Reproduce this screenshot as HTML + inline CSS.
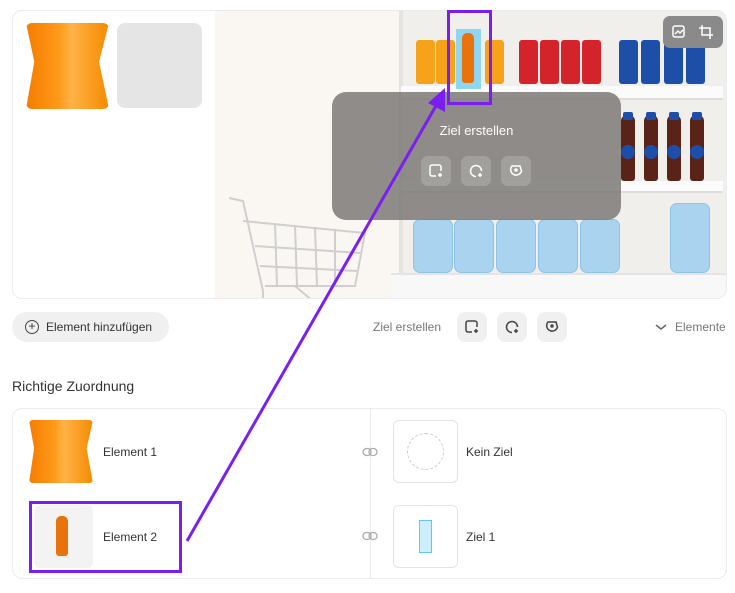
<!DOCTYPE html>
<html><head><meta charset="utf-8"><style>
*{margin:0;padding:0;box-sizing:border-box}
body{width:735px;height:593px;background:#fff;position:relative;overflow:hidden;font-family:"Liberation Sans",sans-serif;color:#333}
.a{position:absolute}
.can{position:absolute;top:29px;width:19px;height:44px;border-radius:3px}
.btn{position:absolute;width:30px;height:30px;background:#f0f0f0;border-radius:8px;display:flex;align-items:center;justify-content:center}
.pbtn{position:absolute;top:145px;width:30px;height:30px;background:rgba(255,255,255,0.18);border-radius:7px;display:flex;align-items:center;justify-content:center}
.wt{position:absolute;top:208px;width:40px;height:54px;background:#a9d3ef;border-radius:7px;border:1px solid #8ec3e6}
.pb{position:absolute;top:104px;width:14px;height:66px;background:#5a2318;border-radius:6px 6px 3px 3px}
.pb:before{content:"";position:absolute;left:2px;top:-3px;width:10px;height:8px;background:#1e4fa8;border-radius:2px}
.pb:after{content:"";position:absolute;left:0;top:30px;width:14px;height:14px;background:#1e4fa8;border-radius:50%}
</style></head><body>
<div class="a" style="left:12px;top:10px;width:715px;height:289px;border:1px solid #ececec;border-radius:10px;overflow:hidden;background:#faf7f3">
  <div class="a" style="left:0;top:0;width:202px;height:289px;background:#fff"></div>
  <div class="a" style="left:13px;top:12px;width:83px;height:86px;background:linear-gradient(90deg,#f57c00,#ff9a1a 40%,#ffb347 55%,#f58a00);border-radius:6px;clip-path:polygon(0 0,100% 0,88% 45%,100% 100%,0 100%,10% 45%)"></div>
  <div class="a" style="left:104px;top:12px;width:85px;height:85px;background:#e5e5e5;border-radius:8px"></div>
  <svg class="a" style="left:202px;top:180px" width="170" height="110"><g fill="none" stroke="#cfcfcf" stroke-width="2"><path d="M14 7 L28 10 L48 100 L48 110"/><path d="M28 30 L150 42 L140 95 L50 95"/><path d="M40 55 L145 62 M45 75 L142 80"/><path d="M60 32 L62 95 M80 34 L82 95 M100 36 L102 95 M120 38 L120 95"/><path d="M80 95 L110 120"/></g></svg>
  <div class="a" style="left:386px;top:0;width:329px;height:289px;background:#f1efec;border-left:4px solid #e6e3df"></div>
  <div class="a" style="left:388px;top:75px;width:322px;height:14px;background:#fbfbfb;border-bottom:2px solid #ddd"></div>
  <div class="a" style="left:388px;top:170px;width:322px;height:12px;background:#fbfbfb;border-bottom:2px solid #ddd"></div>
  <div class="a" style="left:378px;top:262px;width:337px;height:27px;background:#f8f8f8;border-top:2px solid #e4e4e4"></div>
  <div class="can" style="left:403px;background:#f7a21b"></div>
  <div class="can" style="left:423px;background:#f7a21b"></div>
  <div class="can" style="left:472px;background:#f7a21b"></div>
  <div class="a" style="left:443px;top:18px;width:25px;height:60px;background:#8fd6f2"></div>
  <div class="a" style="left:449px;top:22px;width:12px;height:50px;background:#e8720c;border-radius:5px 5px 3px 3px"></div>
  <div class="can" style="left:506px;background:#d4232b"></div>
  <div class="can" style="left:527px;background:#d4232b"></div>
  <div class="can" style="left:548px;background:#d4232b"></div>
  <div class="can" style="left:569px;background:#d4232b"></div>
  <div class="can" style="left:606px;background:#1e4fa8"></div>
  <div class="can" style="left:628px;background:#1e4fa8"></div>
  <div class="can" style="left:651px;background:#1e4fa8"></div>
  <div class="can" style="left:673px;background:#1e4fa8"></div>
  <div class="pb" style="left:608px"></div><div class="pb" style="left:631px"></div><div class="pb" style="left:654px"></div><div class="pb" style="left:677px"></div>
  <div class="wt" style="left:400px"></div><div class="wt" style="left:441px"></div><div class="wt" style="left:483px"></div><div class="wt" style="left:525px"></div><div class="wt" style="left:567px"></div>
  <div class="wt" style="left:657px;top:192px;height:70px"></div>
  <div class="a" style="left:650px;top:5px;width:60px;height:32px;background:#8a8a8a;border-radius:7px"></div>
  <svg class="a" style="left:659px;top:13px" width="45" height="16" fill="none" stroke="#fff" stroke-width="1.5"><rect x="1" y="2" width="11" height="11" rx="2"/><path d="M3 10 l3-3 2 2 3-3"/><path d="M30 1 v10 h11 M27 4 h11 v11"/></svg>
  <div class="a" style="left:319px;top:81px;width:289px;height:128px;background:rgba(128,125,122,0.88);border-radius:14px"></div>
  <div class="a" style="left:319px;top:112px;width:289px;text-align:center;color:#fff;font-size:13px">Ziel erstellen</div>
  <div class="pbtn" style="left:408px"><svg width="14" height="14" fill="none" stroke="#fff" stroke-width="1.5"><path d="M7 12 H3 a2 2 0 0 1-2-2 V3 a2 2 0 0 1 2-2 h7 a2 2 0 0 1 2 2 v4 M11 9 v4 M9 11 h4"/></svg></div>
  <div class="pbtn" style="left:448px"><svg width="14" height="14" fill="none" stroke="#fff" stroke-width="1.5"><path d="M7 12.5 A5.5 5.5 0 1 1 12.5 7 M11 9 v4 M9 11 h4"/></svg></div>
  <div class="pbtn" style="left:488px"><svg width="14" height="14" fill="none" stroke="#fff" stroke-width="1.5"><path d="M3 2 L11 2 L12.5 7 A5.5 5.5 0 1 1 3 2 Z"/><circle cx="7" cy="6" r="1"/></svg></div>
</div>
<div class="a" style="left:12px;top:312px;width:157px;height:30px;background:#f0f0f0;border-radius:15px;font-size:12px;line-height:30px;padding-left:34px;color:#333">Element hinzufügen</div>
<div class="a" style="left:25px;top:320px;width:14px;height:14px;border:1.5px solid #444;border-radius:50%;font-size:12px;line-height:11px;text-align:center">+</div>
<div class="a" style="left:373px;top:320px;font-size:12px;color:#777">Ziel erstellen</div>
<div class="btn" style="left:457px;top:312px"><svg width="14" height="14" fill="none" stroke="#444" stroke-width="1.5"><path d="M7 12 H3 a2 2 0 0 1-2-2 V3 a2 2 0 0 1 2-2 h7 a2 2 0 0 1 2 2 v4 M11 9 v4 M9 11 h4"/></svg></div>
<div class="btn" style="left:497px;top:312px"><svg width="14" height="14" fill="none" stroke="#444" stroke-width="1.5"><path d="M7 12.5 A5.5 5.5 0 1 1 12.5 7 M11 9 v4 M9 11 h4"/></svg></div>
<div class="btn" style="left:537px;top:312px"><svg width="14" height="14" fill="none" stroke="#444" stroke-width="1.5"><path d="M3 2 L11 2 L12.5 7 A5.5 5.5 0 1 1 3 2 Z"/><circle cx="7" cy="6" r="1"/></svg></div>
<svg class="a" style="left:655px;top:323px" width="12" height="8" fill="none" stroke="#666" stroke-width="1.5"><path d="M1 2 L6 6 L11 2"/></svg>
<div class="a" style="left:675px;top:320px;font-size:12px;color:#777">Elemente</div>
<div class="a" style="left:12px;top:378px;font-size:14px;color:#333">Richtige Zuordnung</div>
<div class="a" style="left:12px;top:408px;width:715px;height:171px;border:1px solid #ececec;border-radius:10px"></div>
<div class="a" style="left:370px;top:409px;width:1px;height:169px;background:#ececec"></div>
<div class="a" style="left:29px;top:420px;width:64px;height:63px;background:linear-gradient(90deg,#f57c00,#ff9a1a 40%,#ffb347 55%,#f58a00);clip-path:polygon(0 0,100% 0,90% 45%,100% 100%,0 100%,8% 45%);border-radius:4px"></div>
<div class="a" style="left:103px;top:445px;font-size:12px">Element 1</div>
<div class="a" style="left:34px;top:505px;width:59px;height:63px;background:#f3f3f3;border-radius:6px"></div>
<div class="a" style="left:56px;top:516px;width:12px;height:40px;background:#e8720c;border-radius:5px 5px 3px 3px"></div>
<div class="a" style="left:103px;top:530px;font-size:12px">Element 2</div>
<svg class="a" style="left:362px;top:447px" width="16" height="10" fill="none" stroke="#aaa" stroke-width="1.3"><rect x="1" y="1.5" width="8" height="7" rx="3.5"/><rect x="7" y="1.5" width="8" height="7" rx="3.5"/></svg>
<svg class="a" style="left:362px;top:531px" width="16" height="10" fill="none" stroke="#aaa" stroke-width="1.3"><rect x="1" y="1.5" width="8" height="7" rx="3.5"/><rect x="7" y="1.5" width="8" height="7" rx="3.5"/></svg>
<div class="a" style="left:393px;top:420px;width:65px;height:63px;border:1px solid #e4e4e4;border-radius:6px"></div>
<div class="a" style="left:407px;top:433px;width:37px;height:37px;border:1px dashed #ccc;border-radius:50%"></div>
<div class="a" style="left:466px;top:445px;font-size:12px">Kein Ziel</div>
<div class="a" style="left:393px;top:505px;width:65px;height:63px;border:1px solid #e4e4e4;border-radius:6px"></div>
<div class="a" style="left:419px;top:520px;width:13px;height:33px;background:#cdeefb;border:1.5px solid #5ec8f0"></div>
<div class="a" style="left:466px;top:530px;font-size:12px">Ziel 1</div>
<div class="a" style="left:447px;top:10px;width:45px;height:95px;border:3px solid #7a1ff0"></div>
<div class="a" style="left:29px;top:501px;width:153px;height:72px;border:3px solid #7a1ff0"></div>
<svg class="a" style="left:0;top:0" width="735" height="593"><line x1="187" y1="541" x2="437" y2="104" stroke="#7a1ff0" stroke-width="3"/><polygon points="445,88 445,112 428,103" fill="#7a1ff0"/></svg>
</body></html>
